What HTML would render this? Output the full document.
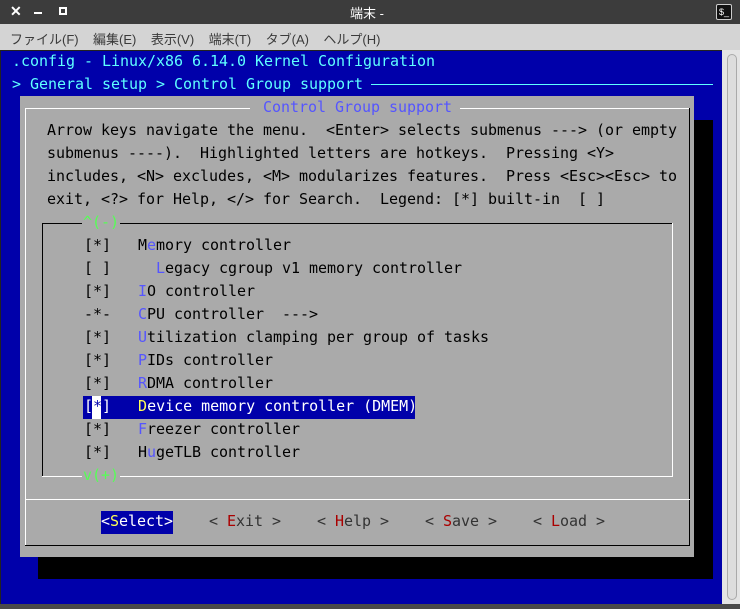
<!DOCTYPE html>
<html><head><meta charset="utf-8"><style>
*{margin:0;padding:0;box-sizing:border-box}
body{width:740px;height:609px;overflow:hidden;background:#4a4a4a;position:relative;font-family:"Liberation Sans","Noto Sans CJK JP",sans-serif}
.a{position:absolute}
.l{position:absolute;white-space:pre;font-family:"DejaVu Sans Mono","Liberation Mono",monospace;font-size:15px;line-height:23px;color:#000;letter-spacing:-0.03px;margin-top:1px}
.c{color:#5fffff}.b{color:#5555ff}.g{color:#55ff55}.y{color:#ffff55}.r{color:#aa0000}.w{color:#fff}
</style></head><body>
<div class="a" style="left:0;top:0;width:740px;height:24px;background:#3c3c3c"></div>
<div class="a" style="left:10px;top:3px;color:#fff;font-size:14px;font-weight:bold">✕</div>
<div class="a" style="left:34px;top:12px;width:8px;height:2px;background:#fff"></div>
<div class="a" style="left:59px;top:7px;width:8px;height:8px;border:2px solid #fff"></div>
<div class="a" style="left:350px;top:3px;color:#fff;font-size:13px">端末 -</div>
<div class="a" style="left:716px;top:4px;width:16px;height:16px;border:1px solid #ccc;border-radius:2px;background:#111;color:#fff;font-size:9px;line-height:14px;padding-left:2px">$_</div>
<div class="a" style="left:0;top:24px;width:740px;height:26px;background:#d4d4d4"></div>
<div class="a" style="left:10px;top:29px;font-size:13px;color:#3a3a3a;white-space:pre">ファイル(F)    編集(E)    表示(V)    端末(T)    タブ(A)    ヘルプ(H)</div>
<div class="a" style="left:0;top:50px;width:722px;height:554px;background:#0000aa;border-left:1px solid #222;border-top:1px solid #222"></div>
<div class="a" style="left:722px;top:50px;width:18px;height:554px;background:#e4e4e4"></div>
<div class="a" style="left:727px;top:54px;width:10px;height:546px;border:1px solid #aaa;border-radius:5px;background:#ddd"></div>
<div class="l c" style="left:12px;top:49px">.config - Linux/x86 6.14.0 Kernel Configuration</div>
<div class="l c" style="left:12px;top:72px">&gt; General setup &gt; Control Group support</div>
<div class="a" style="left:371px;top:84px;width:342px;height:1px;background:#5fffff"></div>
<div class="a" style="left:38px;top:120px;width:675px;height:459px;background:#000"></div>
<div class="a" style="left:20px;top:96px;width:674px;height:461px;background:#aaa"></div>
<div class="a" style="left:25px;top:108px;width:664px;height:1px;background:#fff"></div>
<div class="a" style="left:25px;top:108px;width:1px;height:437px;background:#fff"></div>
<div class="a" style="left:689px;top:108px;width:1px;height:437px;background:#000"></div>
<div class="a" style="left:25px;top:545px;width:665px;height:1px;background:#000"></div>
<div class="a" style="left:250px;top:97px;width:210px;height:20px;background:#aaa"></div>
<div class="l b" style="left:263px;top:95px">Control Group support</div>
<div class="l" style="left:47px;top:118px">Arrow keys navigate the menu.  &lt;Enter&gt; selects submenus ---&gt; (or empty</div>
<div class="l" style="left:47px;top:141px">submenus ----).  Highlighted letters are hotkeys.  Pressing &lt;Y&gt;</div>
<div class="l" style="left:47px;top:164px">includes, &lt;N&gt; excludes, &lt;M&gt; modularizes features.  Press &lt;Esc&gt;&lt;Esc&gt; to</div>
<div class="l" style="left:47px;top:187px">exit, &lt;?&gt; for Help, &lt;/&gt; for Search.  Legend: [*] built-in  [ ]</div>
<div class="a" style="left:42px;top:223px;width:630px;height:1px;background:#000"></div>
<div class="a" style="left:42px;top:223px;width:1px;height:253px;background:#000"></div>
<div class="a" style="left:672px;top:223px;width:1px;height:253px;background:#fff"></div>
<div class="a" style="left:42px;top:476px;width:631px;height:1px;background:#fff"></div>
<div class="a" style="left:82px;top:216px;width:38px;height:14px;background:#aaa"></div>
<div class="l g" style="left:83px;top:210px">^(-)</div>
<div class="a" style="left:82px;top:468px;width:38px;height:14px;background:#aaa"></div>
<div class="l g" style="left:83px;top:463px">v(+)</div>
<div class="l" style="left:84px;top:233px">[*]   M<span class="b">e</span>mory controller</div>
<div class="l" style="left:84px;top:256px">[ ]     <span class="b">L</span>egacy cgroup v1 memory controller</div>
<div class="l" style="left:84px;top:279px">[*]   <span class="b">I</span>O controller</div>
<div class="l" style="left:84px;top:302px">-*-   <span class="b">C</span>PU controller  ---&gt;</div>
<div class="l" style="left:84px;top:325px">[*]   <span class="b">U</span>tilization clamping per group of tasks</div>
<div class="l" style="left:84px;top:348px">[*]   <span class="b">P</span>IDs controller</div>
<div class="l" style="left:84px;top:371px">[*]   <span class="b">R</span>DMA controller</div>
<div class="a" style="left:83px;top:396px;width:332px;height:23px;background:#0000aa"></div>
<div class="a" style="left:92px;top:396px;width:9px;height:23px;background:#fff"></div>
<div class="l w" style="left:84px;top:394px">[<span style="color:#0000aa">*</span>]   <span class="y">D</span>evice memory controller (DMEM)</div>
<div class="l" style="left:84px;top:417px">[*]   <span class="b">F</span>reezer controller</div>
<div class="l" style="left:84px;top:440px">[*]   H<span class="b">u</span>geTLB controller</div>
<div class="a" style="left:25px;top:499px;width:665px;height:1px;background:#fff"></div>
<div class="a" style="left:101px;top:511px;width:72px;height:23px;background:#0000aa"></div>
<div class="l w" style="left:101px;top:509px">&lt;<span class="y">S</span>elect&gt;</div>
<div class="l" style="left:209px;top:509px;color:#333">&lt; <span class="r">E</span>xit &gt;</div>
<div class="l" style="left:317px;top:509px;color:#333">&lt; <span class="r">H</span>elp &gt;</div>
<div class="l" style="left:425px;top:509px;color:#333">&lt; <span class="r">S</span>ave &gt;</div>
<div class="l" style="left:533px;top:509px;color:#333">&lt; <span class="r">L</span>oad &gt;</div>
</body></html>
